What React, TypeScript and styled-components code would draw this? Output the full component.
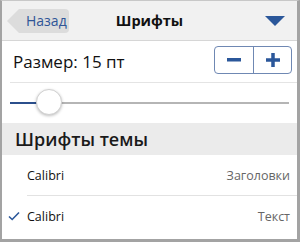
import React from 'react'
import styled, { createGlobalStyle } from 'styled-components'

const Global = createGlobalStyle`
  body { margin: 0; background: #fff; }
  * { box-sizing: border-box; }
`

const Frame = styled.div`
  width: 300px;
  height: 242px;
  border-left: 2px solid #a3a3a3;
  border-right: 3px solid #a3a3a3;
  border-bottom: 3px solid #a3a3a3;
  border-top: 1px solid #c8c8c8;
  font-family: "Open Sans", "Liberation Sans", sans-serif;
  color: #111;
  overflow: hidden;
  display: flex;
  flex-direction: column;
`

const Header = styled.div`
  height: 40px;
  background: #f1f1f1;
  border-bottom: 1px solid #d6d6d6;
  display: grid;
  grid-template-columns: 80px 1fr 80px;
  align-items: center;
`

const Back = styled.div`
  position: relative;
  margin-left: 17px;
  width: 50px;
  height: 24px;
  background: #dcdcdc;
  border-radius: 0 4px 4px 0;
  color: #2f5597;
  font-size: 14px;
  display: flex;
  align-items: center;
  padding-left: 7px;
  &::before {
    content: '';
    position: absolute;
    left: -12px;
    top: 0;
    border-top: 12px solid transparent;
    border-bottom: 12px solid transparent;
    border-right: 12px solid #dcdcdc;
  }
`

const Title = styled.div`
  text-align: center;
  font-weight: 700;
  font-size: 14.5px;
`

const Caret = styled.div`
  justify-self: end;
  margin-right: 12px;
  width: 0;
  height: 0;
  border-left: 10px solid transparent;
  border-right: 10px solid transparent;
  border-top: 10px solid #2b579a;
`

const SizeRow = styled.div`
  height: 42px;
  display: flex;
  align-items: center;
  justify-content: space-between;
  padding: 0 5px 0 3px;
  margin-left: 8px;
  font-size: 17px;
  border-bottom: 1px solid #e4e4e4;
`

const Stepper = styled.div`
  display: flex;
  border: 1px solid #6f88b3;
  border-radius: 4px;
  overflow: hidden;
  margin-top: -4px;
`

const StepBtn = styled.div<{ $sep?: boolean }>`
  width: 38px;
  height: 26px;
  display: flex;
  align-items: center;
  justify-content: center;
  border-left: ${p => (p.$sep ? '1px solid #6f88b3' : 'none')};
`

const SliderRow = styled.div`
  height: 40px;
  display: flex;
  align-items: center;
  padding: 0 8px;
`

const Track = styled.div`
  flex: 1;
  height: 2px;
  background: #b5b5b5;
  position: relative;
`

const Fill = styled.div`
  position: absolute;
  left: 0;
  top: 0;
  height: 2px;
  background: #2b4f8c;
`

const Thumb = styled.div`
  position: absolute;
  top: -13px;
  width: 26px;
  height: 26px;
  border-radius: 50%;
  background: #fff;
  border: 1px solid #d0d0d0;
  box-shadow: 0 1px 3px rgba(0, 0, 0, 0.25);
`

const Section = styled.div`
  height: 32px;
  background: #ebebeb;
  display: flex;
  align-items: center;
  padding-left: 13px;
  font-size: 18px;
  font-weight: 600;
  color: #1a1a1a;
`

const FontRow = styled.div<{ $last?: boolean }>`
  height: 41px;
  margin-left: 25px;
  padding-right: 7px;
  display: flex;
  align-items: center;
  justify-content: space-between;
  font-size: 12.5px;
  border-bottom: ${p => (p.$last ? 'none' : '1px solid #e2e2e2')};
  position: relative;
`

const Name = styled.span`
  color: #111;
`

const Kind = styled.span`
  color: #666;
`

const Check = styled.svg`
  position: absolute;
  left: -19px;
  top: 15px;
`

export default function App() {
  const value = 39
  return (
    <>
      <Global />
      <Frame>
        <Header>
          <Back>Назад</Back>
          <Title>Шрифты</Title>
          <Caret />
        </Header>
        <SizeRow>
          <span>Размер: 15 пт</span>
          <Stepper>
            <StepBtn>
              <svg width="14" height="4" viewBox="0 0 14 4"><rect width="14" height="3.5" fill="#2b579a" /></svg>
            </StepBtn>
            <StepBtn $sep>
              <svg width="14" height="14" viewBox="0 0 14 14"><rect y="5.25" width="14" height="3.5" fill="#2b579a" /><rect x="5.25" width="3.5" height="14" fill="#2b579a" /></svg>
            </StepBtn>
          </Stepper>
        </SizeRow>
        <SliderRow>
          <Track>
            <Fill style={{ width: value - 8 }} />
            <Thumb style={{ left: value - 13 }} />
          </Track>
        </SliderRow>
        <Section>Шрифты темы</Section>
        <FontRow>
          <Name>Calibri</Name>
          <Kind>Заголовки</Kind>
        </FontRow>
        <FontRow $last>
          <Check width="12" height="10" viewBox="0 0 12 10">
            <path d="M1 5.5 L4.2 8.5 L11 1.5" fill="none" stroke="#2b579a" strokeWidth="1.6" />
          </Check>
          <Name>Calibri</Name>
          <Kind>Текст</Kind>
        </FontRow>
      </Frame>
    </>
  )
}
